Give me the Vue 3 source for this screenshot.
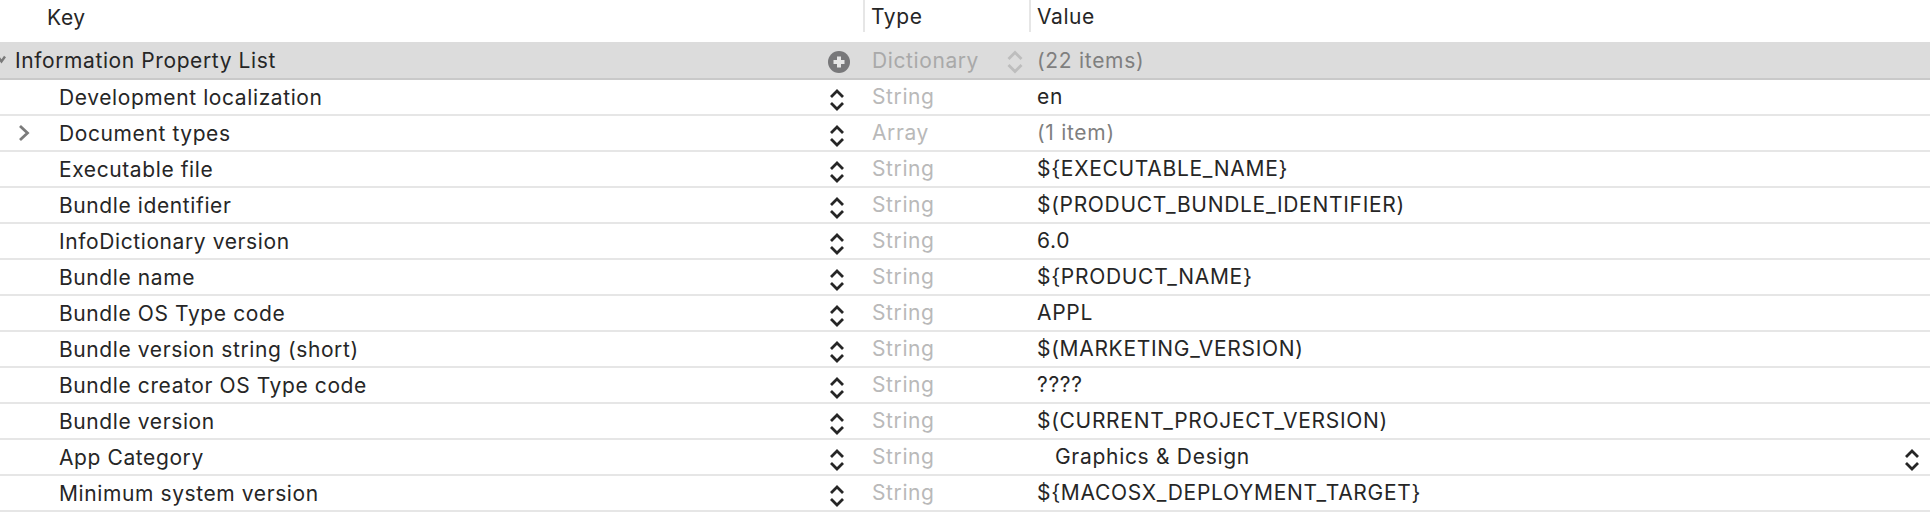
<script setup>
const rows = [
  { key: 'Development localization', type: 'String', value: 'en' },
  { key: 'Document types', type: 'Array', value: '(1 item)', expand: true, muted: true },
  { key: 'Executable file', type: 'String', value: '${EXECUTABLE_NAME}' },
  { key: 'Bundle identifier', type: 'String', value: '$(PRODUCT_BUNDLE_IDENTIFIER)' },
  { key: 'InfoDictionary version', type: 'String', value: '6.0' },
  { key: 'Bundle name', type: 'String', value: '${PRODUCT_NAME}' },
  { key: 'Bundle OS Type code', type: 'String', value: 'APPL' },
  { key: 'Bundle version string (short)', type: 'String', value: '$(MARKETING_VERSION)' },
  { key: 'Bundle creator OS Type code', type: 'String', value: '????' },
  { key: 'Bundle version', type: 'String', value: '$(CURRENT_PROJECT_VERSION)' },
  { key: 'App Category', type: 'String', value: 'Graphics & Design', popup: true },
  { key: 'Minimum system version', type: 'String', value: '${MACOSX_DEPLOYMENT_TARGET}' },
]
</script>

<template>
  <div class="plist">
    <div class="head">
      <div class="h-key">Key</div>
      <div class="h-type">Type</div>
      <div class="h-value">Value</div>
    </div>
    <div class="root">
      <div class="c-key">
        <svg class="disc-root" width="6" height="10" viewBox="0 0 6 10"><path d="M-1 3 L1.5 6.5 L5 1.5" fill="none" stroke="#7a7a7a" stroke-width="2.4"/></svg>
        <span class="root-name">Information Property List</span>
        <svg class="plus" width="22" height="22" viewBox="0 0 22 22"><circle cx="11" cy="11" r="11" fill="#78787a"/><path d="M11 5.5v11M5.5 11h11" stroke="#e6e6e6" stroke-width="4"/></svg>
      </div>
      <div class="c-type root-type">
        <span>Dictionary</span>
        <svg class="root-step" width="16" height="24" viewBox="0 0 16 24"><path d="M1.5 9 L8 2.5 L14.5 9M1.5 15 L8 21.5 L14.5 15" fill="none" stroke="#bdbdbd" stroke-width="2.8"/></svg>
      </div>
      <div class="c-value muted">(22 items)</div>
    </div>
    <div v-for="r in rows" :key="r.key" class="row">
      <div class="c-key">
        <svg v-if="r.expand" class="disc" width="12" height="18" viewBox="0 0 12 18"><path d="M2 2 L9.5 9 L2 16" fill="none" stroke="#7b7b7b" stroke-width="2.8"/></svg>
        <span class="name">{{ r.key }}</span>
        <svg class="step" width="16" height="24" viewBox="0 0 16 24"><path d="M2 9 L8 3 L14 9M2 15 L8 21 L14 15" fill="none" stroke="#262626" stroke-width="2.8"/></svg>
      </div>
      <div class="c-type type-text">{{ r.type }}</div>
      <div class="c-value" :class="{ muted: r.muted, popup: r.popup }">
        <span>{{ r.value }}</span>
        <svg v-if="r.popup" class="step" width="16" height="24" viewBox="0 0 16 24"><path d="M2 9 L8 3 L14 9M2 15 L8 21 L14 15" fill="none" stroke="#262626" stroke-width="2.8"/></svg>
      </div>
    </div>
  </div>
</template>

<style scoped>
.plist {
  width: 1930px;
  height: 516px;
  overflow: hidden;
  background: #fff;
  color: #262626;
  font-family: Inter, "Liberation Sans", sans-serif;
  font-size: 21px;
  letter-spacing: 0.6px;
}
.head {
  display: grid;
  grid-template-columns: 863px 166px 1fr;
  height: 42px;
}
.h-key {
  padding: 4px 0 0 47px;
  line-height: 27px;
}
.h-type,
.h-value {
  height: 32px;
  border-left: 2px solid #e6e6e6;
  padding: 3px 0 0 6px;
  line-height: 27px;
  box-sizing: border-box;
}
.root,
.row {
  display: grid;
  grid-template-columns: 864px 166px 1fr;
  align-items: center;
}
.root {
  height: 38px;
  background: #dcdcdc;
  border-bottom: 2px solid #c9c9c9;
  box-sizing: border-box;
}
.row {
  height: 36px;
  box-sizing: border-box;
  border-bottom: 2px solid #e6e6e6;
}
.c-key {
  display: flex;
  align-items: center;
  height: 100%;
  position: relative;
}
.disc-root {
  margin-right: 9px;
}
.plus {
  position: absolute;
  left: 828px;
  top: 9px;
}
.name {
  margin-left: 59px;
}
.disc {
  position: absolute;
  left: 18px;
  top: 8px;
}
.c-key .step {
  position: absolute;
  left: 829px;
  top: 8px;
}
.c-type {
  padding: 0 7px 0 8px;
  display: flex;
  align-items: center;
  justify-content: space-between;
  height: 100%;
  box-sizing: border-box;
}
.root-step {
  margin-top: 4px;
}
.root-type {
  color: #a9a9a9;
}
.type-text {
  color: #b9b9b9;
  padding-bottom: 2px;
}
.c-value {
  padding-left: 7px;
  letter-spacing: 0.7px;
}
.row .c-value {
  padding-bottom: 2px;
}
.muted {
  color: #7f7f7f;
}
.row .popup {
  display: flex;
  align-items: center;
  justify-content: space-between;
  padding-left: 25px;
  padding-right: 10px;
}
.popup .step {
  margin-top: 4px;
  margin-bottom: -4px;
}
</style>
